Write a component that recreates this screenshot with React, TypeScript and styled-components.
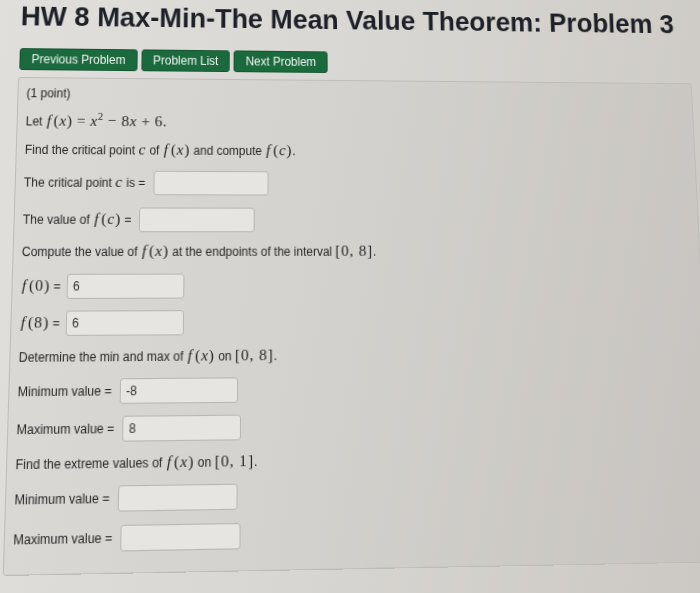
import React from 'react';
import styled, { createGlobalStyle } from 'styled-components';

const GlobalStyle = createGlobalStyle`
  html, body {
    margin: 0;
    padding: 0;
    height: 100%;
    overflow: hidden;
  }
  body {
    background: linear-gradient(100deg, #e1dfdc 0%, #d9d7d3 45%, #ccc9c4 100%);
    font-family: 'Liberation Sans', Arial, sans-serif;
    color: #262626;
  }
`;

// the reference is a phone photo of a monitor; this projective matrix
// re-creates the camera tilt (top-left stays put, bottom widens, right recedes)
const PHOTO_TILT =
  'matrix3d(0.993856, 0.013643, 0, 0.000056596, -0.032613, 0.984709, 0, -0.000118882, 0, 0, 1, 0, 0.48964, 0.28688, 0, 1)';

const Page = styled.div`
  width: 740px;
  padding: 0 20px;
  box-sizing: border-box;
  transform-origin: 0 0;
  transform: ${PHOTO_TILT};
`;

const Title = styled.h1`
  margin: 0 0 0 1px;
  font-size: 27.8px;
  line-height: 32px;
  font-weight: 700;
  color: #1d2026;
  white-space: nowrap;
`;

const Nav = styled.nav`
  display: flex;
  gap: 4px;
  margin: 16px 0 7px 1px;
`;

const NavButton = styled.button`
  height: 22px;
  padding: 0 11px;
  font: 12px 'Liberation Sans', Arial, sans-serif;
  color: #f3f5f3;
  background: #1b6a3d;
  border: 1px solid #14552f;
  border-radius: 3px;
`;

const Problem = styled.section`
  box-sizing: border-box;
  width: 700px;
  height: 470px;
  padding: 7px 8px;
  border: 1px solid #bebcb7;
  border-radius: 3px;
  background: rgba(70, 60, 50, 0.03);
  display: flex;
  flex-direction: column;
  gap: 11.6px;
  font-size: 12px;
  color: #262626;
`;

const Text = styled.p`
  margin: 0;
  height: 16.5px;
  line-height: 16.5px;
  white-space: nowrap;
`;

const Field = styled.div<{ $gap?: number }>`
  display: flex;
  align-items: center;
  gap: ${(p) => p.$gap ?? 8}px;
  height: 24px;
  white-space: nowrap;
`;

const Answer = styled.input`
  box-sizing: border-box;
  width: 116px;
  height: 24px;
  padding: 0 5px;
  font: 12px 'Liberation Sans', Arial, sans-serif;
  color: #333;
  background: #e6e5e2;
  border: 1px solid #b9b7b2;
  border-radius: 3px;
  outline: none;
`;

const Tex = styled.span<{ $tight?: boolean }>`
  font-family: 'Liberation Serif', 'Times New Roman', serif;
  font-size: 15.5px;
  letter-spacing: ${(p) => (p.$tight ? '0.5px' : '0.8px')};
  line-height: 0;
`;

const V = styled.i<{ $f?: boolean }>`
  font-style: italic;
  padding: ${(p) => (p.$f ? '0 2px 0 1px' : '0')};
`;

const Sup = styled.sup`
  font-size: 10.5px;
  line-height: 0;
  vertical-align: 6px;
`;

function F({ arg }: { arg: React.ReactNode }) {
  return (
    <Tex>
      <V $f>f</V>({arg})
    </Tex>
  );
}

const x = <V>x</V>;
const c = <V>c</V>;

export default function App() {
  return (
    <>
      <GlobalStyle />
      <Page>
        <Title>HW 8 Max-Min-The Mean Value Theorem: Problem 3</Title>
        <Nav>
          <NavButton>Previous Problem</NavButton>
          <NavButton>Problem List</NavButton>
          <NavButton>Next Problem</NavButton>
        </Nav>

        <Problem>
          <Text>(1 point)</Text>
          <Text>
            Let{' '}
            <Tex $tight>
              <V $f>f</V>({x}) = {x}
              <Sup>2</Sup> − 8{x} + 6.
            </Tex>
          </Text>
          <Text>
            Find the critical point <Tex>{c}</Tex> of <F arg={x} /> and compute{' '}
            <F arg={c} />.
          </Text>
          <Field>
            <span>
              The critical point <Tex>{c}</Tex> is =
            </span>
            <Answer />
          </Field>
          <Field>
            <span>
              The value of <F arg={c} /> =
            </span>
            <Answer />
          </Field>
          <Text>
            Compute the value of <F arg={x} /> at the endpoints of the interval{' '}
            <Tex>[0, 8]</Tex>.
          </Text>
          <Field $gap={6}>
            <span>
              <F arg="0" /> =
            </span>
            <Answer defaultValue="6" readOnly />
          </Field>
          <Field $gap={6}>
            <span>
              <F arg="8" /> =
            </span>
            <Answer defaultValue="6" readOnly />
          </Field>
          <Text>
            Determine the min and max of <F arg={x} /> on <Tex>[0, 8]</Tex>.
          </Text>
          <Field>
            <span>Minimum value =</span>
            <Answer defaultValue="-8" readOnly />
          </Field>
          <Field>
            <span>Maximum value =</span>
            <Answer defaultValue="8" readOnly />
          </Field>
          <Text>
            Find the extreme values of <F arg={x} /> on <Tex>[0, 1]</Tex>.
          </Text>
          <Field>
            <span>Minimum value =</span>
            <Answer />
          </Field>
          <Field>
            <span>Maximum value =</span>
            <Answer />
          </Field>
        </Problem>
      </Page>
    </>
  );
}
